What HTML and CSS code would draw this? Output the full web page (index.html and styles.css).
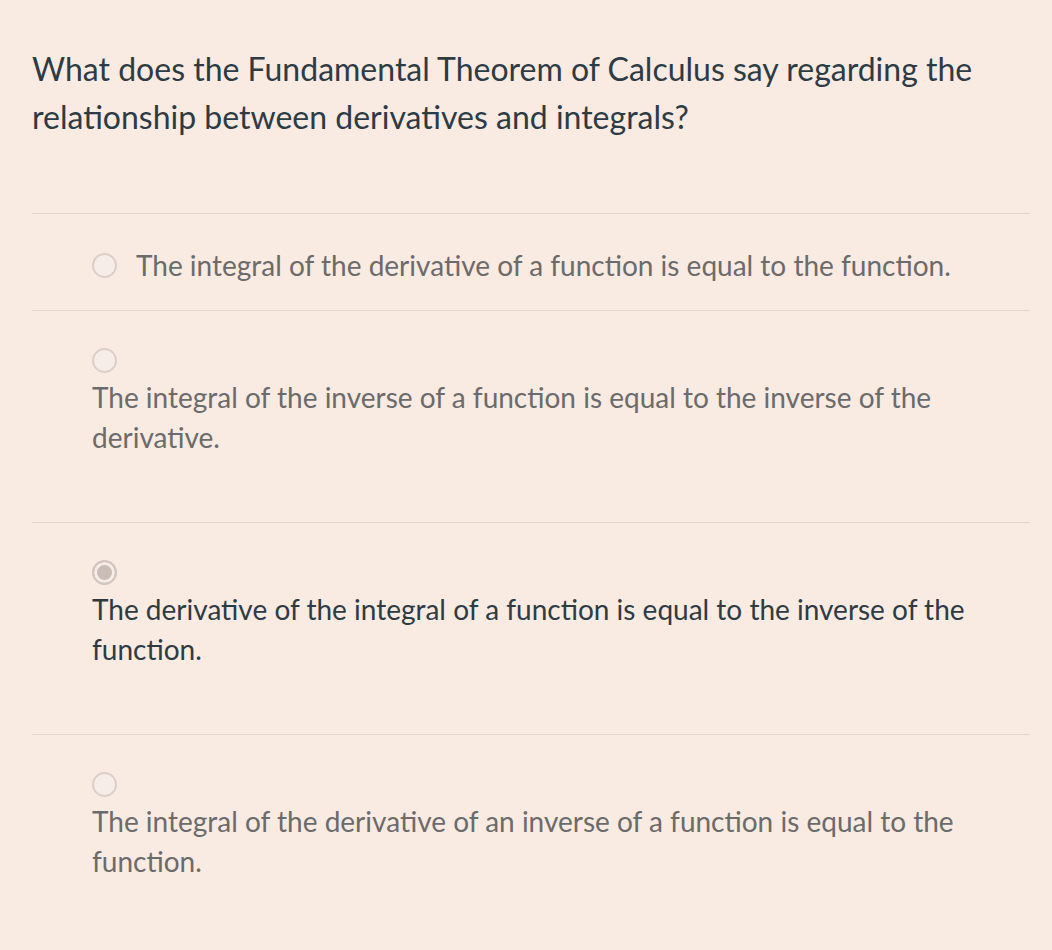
FILE: index.html
```html
<!DOCTYPE html>
<html lang="en">
<head>
    <meta charset="UTF-8">
    <title>Quiz Question</title>
    <link rel="stylesheet" href="styles.css">
</head>
<body>
    <div class="question">
        <p class="question-text">What does the Fundamental Theorem of Calculus say regarding the relationship between derivatives and integrals?</p>
        <div class="answers">
            <label class="answer">
                <span class="radio"></span>
                <span class="answer-text">The integral of the derivative of a function is equal to the function.</span>
            </label>
            <label class="answer long">
                <span class="radio"></span>
                <span class="answer-text">The integral of the inverse of a function is equal to the inverse of the derivative.</span>
            </label>
            <label class="answer long selected">
                <span class="radio"></span>
                <span class="answer-text">The derivative of the integral of a function is equal to the inverse of the function.</span>
            </label>
            <label class="answer long">
                <span class="radio"></span>
                <span class="answer-text">The integral of the derivative of an inverse of a function is equal to the function.</span>
            </label>
        </div>
    </div>
</body>
</html>
```

FILE: styles.css
```css
body { margin: 0; background: #f9eae2; font-family: Lato, "Open Sans", sans-serif; }
.question { padding: 0 22px 0 32px; }
.question-text { margin: 0; padding-top: 45px; padding-bottom: 72px; font-size: 32px; line-height: 48px; color: #2d3b45; border-bottom: 1px solid #e4d4ca; }
.answer { display: flex; flex-wrap: wrap; align-items: center; column-gap: 19px; padding: 31px 0 25px 60px; border-bottom: 1px solid #e4d4ca; font-size: 28px; line-height: 40px; color: #6b6b6b; }
.answer:last-child { border-bottom: none; }
.answer.long { padding-top: 32px; padding-bottom: 65px; }
.answer.selected { color: #2d3b45; }
.radio { display: flex; align-items: center; height: 34px; }
.radio::before { content: ""; width: 21px; height: 21px; border: 2px solid #dccfc7; border-radius: 50%; background: #f7ede8; }
.selected .radio::before { background: #c9bdb6; box-shadow: inset 0 0 0 3px #f7ede8; border-color: #d2c5bd; }
```
